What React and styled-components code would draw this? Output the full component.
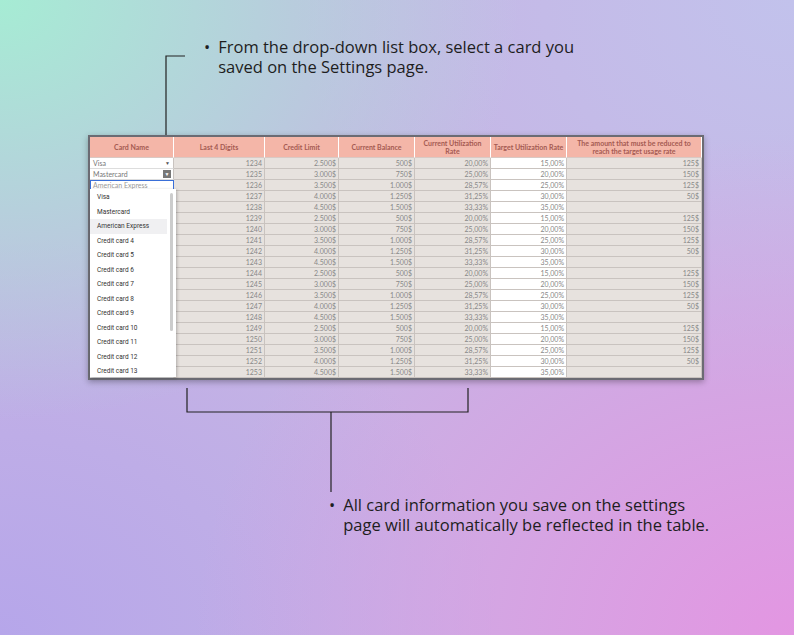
import React from "react";
import styled, { createGlobalStyle } from "styled-components";

const Global = createGlobalStyle`
  html,body{margin:0;padding:0;}
  body{font-family:"Open Sans","Liberation Sans",sans-serif;}
`;

const Page = styled.div`
  width:794px;height:635px;position:relative;overflow:hidden;
  background:
    radial-gradient(ellipse 520px 420px at 0% 0%, #a6ecd4 0%, rgba(166,236,212,0) 100%),
    radial-gradient(ellipse 600px 500px at 100% 100%, #e396e2 0%, rgba(227,150,226,0) 100%),
    radial-gradient(ellipse 500px 400px at 0% 100%, #b6a6ea 0%, rgba(182,166,234,0) 100%),
    radial-gradient(ellipse 500px 400px at 100% 0%, #c2c2ec 0%, rgba(194,194,236,0) 100%),
    #c6b4e4;
  display:flex;flex-direction:column;
`;

const Note = styled.div`
  display:flex;gap:8px;font-size:16.5px;line-height:20px;color:#1e1e1e;
  font-family:"Open Sans","Liberation Sans",sans-serif;
  margin-left:${p=>p.$left}px;width:${p=>p.$w}px;
  &::before{content:"•";}
`;

const Lines = styled.svg`position:absolute;left:0;top:0;pointer-events:none;`;

const Frame = styled.div`
  margin:58px 0 0 88px;width:616px;
  background:#fff;border:2px solid #6b6b73;box-shadow:0 2px 6px rgba(0,0,0,.3);
  position:relative;box-sizing:border-box;
`;

const Grid = styled.div`
  display:grid;
  grid-template-columns:84px 91px 74px 76px 76px 76px 1fr;
  font-family:"Lato","Liberation Sans",sans-serif;
`;

const Head = styled.div`
  background:#f4b6a8;color:#a45a52;font-weight:700;font-size:7px;line-height:8px;
  height:20px;display:flex;align-items:center;justify-content:center;text-align:center;
  border-right:1px solid #fff;border-bottom:1px solid #d9c9c4;padding:0 2px;
`;

const Cell = styled.div`
  height:10px;line-height:10px;font-size:7px;color:#888;text-align:right;padding-right:2px;
  background:${p=>p.$white?"#fff":"#e7e2de"};
  border-right:1px solid #c9c3bf;border-bottom:1px solid #c9c3bf;overflow:hidden;white-space:nowrap;
`;

const NameCell = styled.div`
  height:10px;line-height:10px;font-size:7px;color:#777;padding-left:3px;background:#fff;
  border-right:1px solid #c9c3bf;border-bottom:1px solid #ddd;position:relative;
  ${p=>p.$active && "outline:1px solid #3a6fd8;outline-offset:-1px;color:#999;"}
`;

const DropBtn = styled.span`
  position:absolute;right:2px;top:1px;width:8px;height:8px;background:#777;color:#fff;
  font-size:5px;line-height:8px;text-align:center;
`;
const SmallArrow = styled.span`position:absolute;right:3px;top:0;font-size:5px;color:#555;`;

const Menu = styled.div`
  position:absolute;left:0;top:52px;width:86px;height:187px;background:#fff;
  box-shadow:1px 1px 3px rgba(0,0,0,.25);overflow:hidden;padding-top:1px;
`;
const Item = styled.div`
  height:14.5px;line-height:14.5px;font-size:6.5px;color:#333;padding-left:7px;width:70px;
  font-family:"Roboto","Liberation Sans",sans-serif;
  background:${p=>p.$sel?"#f0f0f2":"transparent"};
`;
const Scroll = styled.div`
  position:absolute;right:3px;top:4px;width:3px;height:138px;background:#ccc;border-radius:2px;
`;

const limits=[2500,3000,3500,4000,4500],bal=[500,750,1000,1250,1500];
const util=["20,00%","25,00%","28,57%","31,25%","33,33%"],tgt=["15,00%","20,00%","25,00%","30,00%","35,00%"];
const amt=["125$","150$","125$","50$",""];
const fmt=n=>n>=1000?`${Math.floor(n/1000)}.${String(n%1000).padStart(3,"0")}$`:`${n}$`;
const names=["Visa","Mastercard","American Express"];

export default function App(){
  const rows=Array.from({length:20},(_,i)=>i);
  return (<Page><Global/>
    <Lines width="794" height="635">
      <polyline points="185,56 166,56 166,152" fill="none" stroke="#222" strokeWidth="1.2"/>
      <polyline points="187,388 187,412 468,412 468,388" fill="none" stroke="#222" strokeWidth="1.2"/>
      <line x1="331" y1="412" x2="331" y2="492" stroke="#222" strokeWidth="1.2"/>
    </Lines>
    <Note $left={204} $w={372} style={{marginTop:37}}>From the drop-down list box, select a card you saved on the Settings page.</Note>
    <Frame>
      <Grid>
        {["Card Name","Last 4 Digits","Credit Limit","Current Balance","Current Utilization Rate","Target Utilization Rate","The amount that must be reduced to reach the target usage rate"].map(h=><Head key={h}>{h}</Head>)}
        {rows.map(i=>{const k=i%5;return <React.Fragment key={i}>
          <NameCell $active={i===2}>{names[i]||""}{i===0&&<SmallArrow>▼</SmallArrow>}{i===1&&<DropBtn>▼</DropBtn>}</NameCell>
          <Cell>{1234+i}</Cell><Cell>{fmt(limits[k])}</Cell><Cell>{fmt(bal[k])}</Cell>
          <Cell>{util[k]}</Cell><Cell $white>{tgt[k]}</Cell><Cell>{amt[k]}</Cell>
        </React.Fragment>;})}
      </Grid>
      <Menu>
        {["Visa","Mastercard","American Express",...Array.from({length:10},(_,j)=>`Credit card ${j+4}`)].map((t,j)=><Item key={t} $sel={j===2}>{t}</Item>)}
        <Scroll/>
      </Menu>
    </Frame>
    <Note $left={329} $w={392} style={{marginTop:115}}>All card information you save on the settings page will automatically be reflected in the table.</Note>
  </Page>);
}
